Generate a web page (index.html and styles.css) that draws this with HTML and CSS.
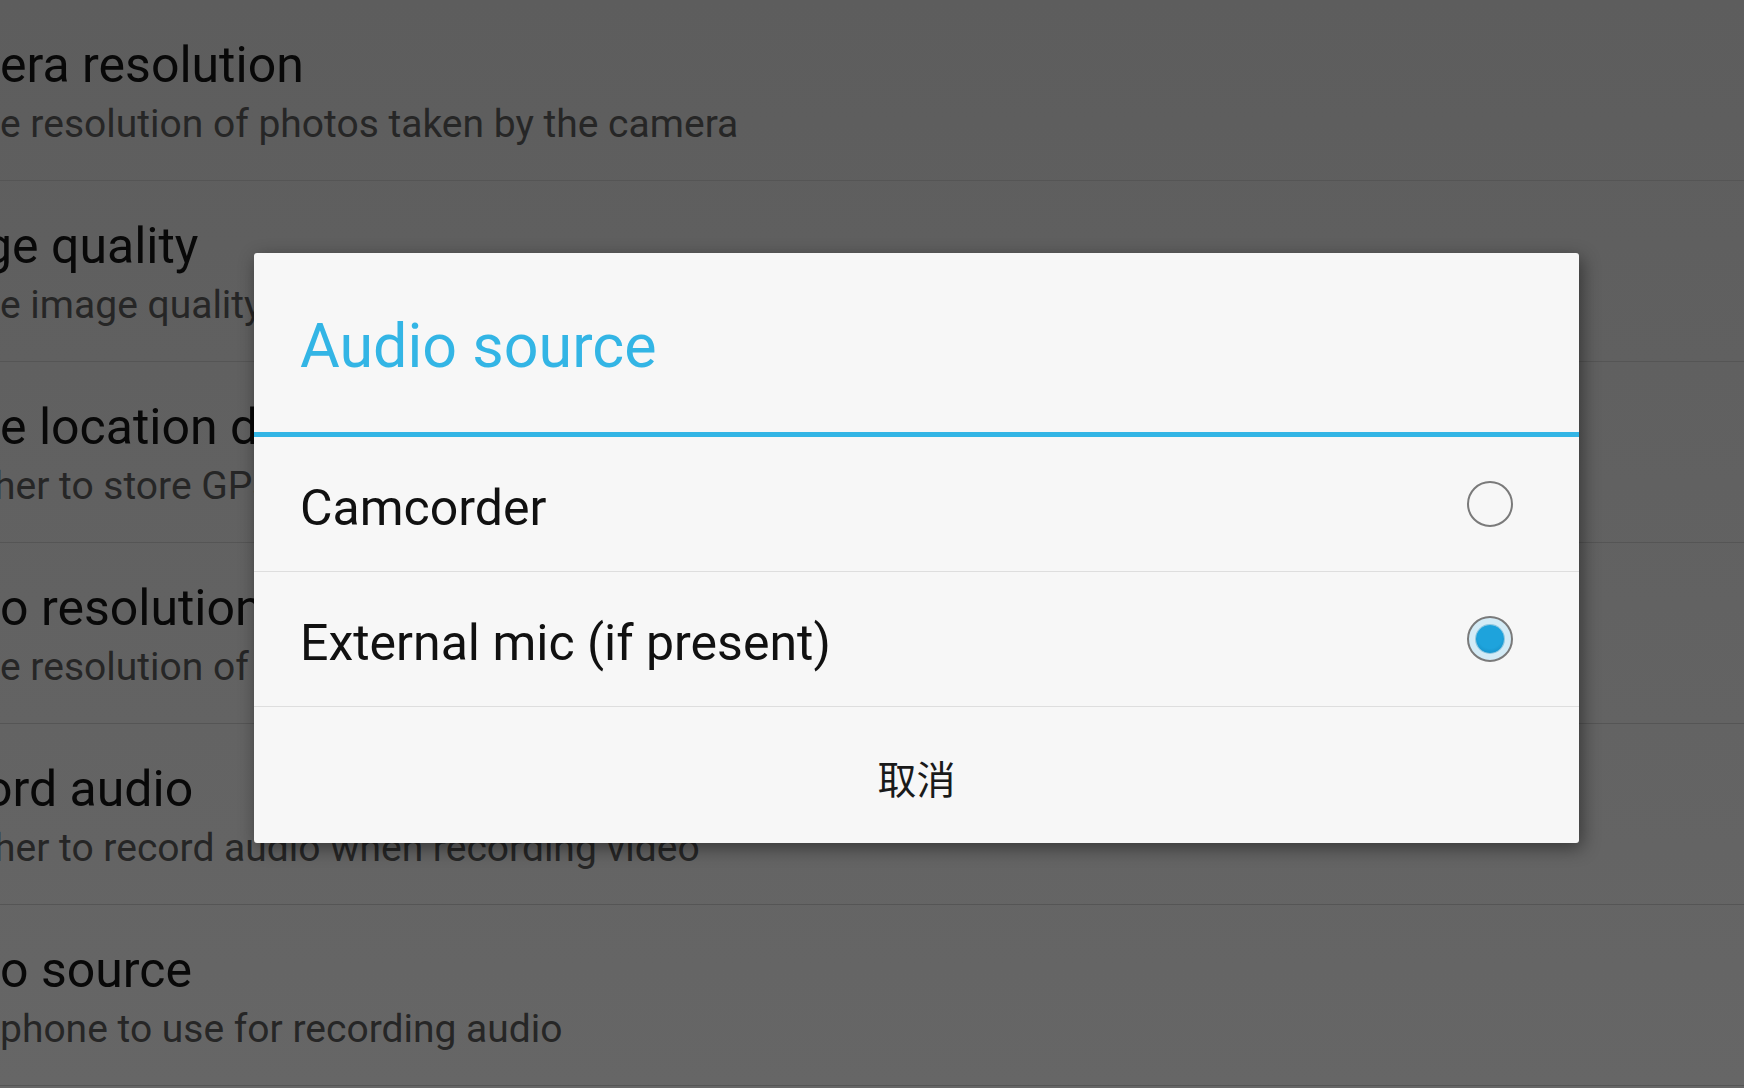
FILE: index.html
```html
<!DOCTYPE html>
<html lang="en">
<head>
    <meta charset="UTF-8">
    <meta name="viewport" content="width=device-width, initial-scale=1.0">
    <title>Settings - Audio source</title>
    <link rel="stylesheet" href="styles.css">
</head>
<body>
    <ul class="prefs">
        <li class="pref">
            <div class="pref-title">era resolution</div>
            <div class="pref-summary">e resolution of photos taken by the camera</div>
        </li>
        <li class="pref">
            <div class="pref-title cut">ge quality</div>
            <div class="pref-summary">e image quality of saved JPEG images</div>
        </li>
        <li class="pref">
            <div class="pref-title">e location data</div>
            <div class="pref-summary cut-stem">her to store GPS location data in photos</div>
        </li>
        <li class="pref">
            <div class="pref-title">o resolution</div>
            <div class="pref-summary">e resolution of videos</div>
        </li>
        <li class="pref">
            <div class="pref-title cut">ord audio</div>
            <div class="pref-summary cut-stem">her to record audio when recording video</div>
        </li>
        <li class="pref">
            <div class="pref-title">o source</div>
            <div class="pref-summary">phone to use for recording audio</div>
        </li>
    </ul>

    <div class="dialog">
        <div class="dialog-title">Audio source</div>
        <div class="dialog-divider"></div>
        <label class="choice">
            <span class="choice-label">Camcorder</span>
            <input type="radio" name="audioSrc" value="camcorder">
            <span class="radio"></span>
        </label>
        <label class="choice">
            <span class="choice-label">External mic (if present)</span>
            <input type="radio" name="audioSrc" value="external" checked>
            <span class="radio"></span>
        </label>
        <button class="dialog-btn" type="button">取消</button>
    </div>
</body>
</html>
```

FILE: styles.css
```css
body {
    margin: 0;
    width: 1744px;
    height: 1088px;
    overflow: hidden;
    font-family: Roboto, "Noto Sans", sans-serif;
    background: linear-gradient(#5d5d5d, #666666);
}

/* dimmed settings list behind the dialog */
.prefs { list-style: none; margin: 0; padding: 0; }
.pref {
    height: 144px;
    border-bottom: 1px solid #555555;
    padding-top: 36px;
    white-space: nowrap;
    overflow: hidden;
}
.pref-title { font-size: 50px; line-height: 58px; color: #080808; }
.pref-summary { font-size: 39px; line-height: 46px; margin-top: 7px; color: #262626; }
.pref-title.cut { text-indent: -16px; }
.pref-summary.cut-stem { text-indent: -6px; }

/* single choice dialog */
.dialog {
    position: absolute;
    left: 254px;
    top: 253px;
    width: 1325px;
    height: 590px;
    background: #f7f7f7;
    border-radius: 3px;
    box-shadow: 3px 5px 18px rgba(0, 0, 0, 0.45);
    display: flex;
    flex-direction: column;
}
.dialog-title {
    height: 179px;
    box-sizing: border-box;
    padding: 57px 0 0 46px;
    font-size: 61px;
    line-height: 72px;
    color: #33b5e5;
}
.dialog-divider { height: 5px; background: #33b5e5; }

.choice {
    height: 134px;
    border-bottom: 1px solid #dedede;
    display: flex;
    align-items: center;
    justify-content: space-between;
    padding: 0 66px 0 46px;
    cursor: pointer;
}
.choice-label { font-size: 50px; line-height: 58px; color: #111; padding-top: 8px; }
.choice input { display: none; }
.radio {
    width: 42px;
    height: 42px;
    border: 2px solid #7a7a7a;
    border-radius: 50%;
    display: flex;
    align-items: center;
    justify-content: center;
}
.choice input:checked + .radio { background: #d3ebf6; }
.choice input:checked + .radio::after {
    content: "";
    width: 28px;
    height: 28px;
    border-radius: 50%;
    background: radial-gradient(circle at 50% 40%, #1ea3dc 55%, #0f86bd 100%);
    box-shadow: 0 0 0 1px #8fc6de;
}

.dialog-btn {
    flex: 1;
    border: none;
    background: transparent;
    font-family: "Noto Sans CJK SC", sans-serif;
    font-size: 39px;
    color: #1a1a1a;
    padding-top: 4px;
    cursor: pointer;
}
```
